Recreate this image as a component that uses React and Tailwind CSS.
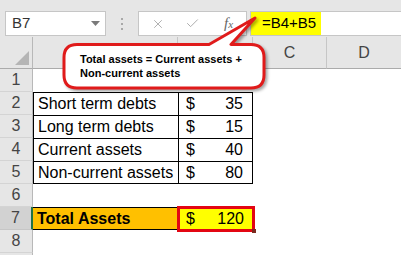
import { X, Check } from 'lucide-react'

const ROWS = [
  { n: 1 },
  { n: 2, label: 'Short term debts', value: 35, table: true },
  { n: 3, label: 'Long term debts', value: 15, table: true },
  { n: 4, label: 'Current assets', value: 40, table: true },
  { n: 5, label: 'Non-current assets', value: 80, table: true, last: true },
  { n: 6 },
  { n: 7, total: true },
  { n: 8 },
  { n: '' },
]

const RowHeader = ({ n, selected }) => (
  <div
    className={
      selected
        ? 'h-[23px] flex items-center justify-center bg-[#d2d2d2] border-r-2 border-r-[#217346] border-b border-b-[#c6c6c6] text-[16px] text-[#444]'
        : 'h-[23px] flex items-center justify-center bg-[#e6e6e6] border-r border-r-[#b8b8b8] border-b border-b-[#d4d4d4] text-[16px] text-[#444]'
    }
  >
    {n}
  </div>
)

const Row = ({ row }) => {
  if (row.table) {
    return (
      <>
        <RowHeader n={row.n} />
        <div
          className={`h-[23px] flex items-center pl-[4px] border-l border-t border-black text-[16px] text-black ${row.last ? 'border-b' : ''}`}
        >
          {row.label}
        </div>
        <div
          className={`h-[23px] flex items-center justify-between pl-[7px] pr-[9px] border-l border-t border-r border-black text-[16px] text-black ${row.last ? 'border-b' : ''}`}
        >
          <span>$</span>
          <span>{row.value}</span>
        </div>
        <div className="h-[23px]" />
        <div className="h-[23px]" />
      </>
    )
  }
  if (row.total) {
    return (
      <>
        <RowHeader n={row.n} selected />
        <div className="h-[23px] flex items-center pl-[4px] bg-[#ffc000] border-t border-b border-black text-[16px] font-bold text-black">
          Total Assets
        </div>
        <div className="h-[23px] relative">
          <div className="absolute -left-[1px] -right-[2px] -top-[1px] -bottom-[2px] flex items-center justify-between pl-[6px] pr-[8px] bg-[#ffff00] border-[3px] border-[#e30613] text-[16px] text-black">
            <span>$</span>
            <span>120</span>
          </div>
          <div className="absolute -right-[3px] -bottom-[3px] w-[4px] h-[4px] bg-[#7a2a1e]" />
        </div>
        <div className="h-[23px]" />
        <div className="h-[23px]" />
      </>
    )
  }
  return (
    <>
      <RowHeader n={row.n} />
      <div className="h-[23px]" />
      <div className="h-[23px]" />
      <div className="h-[23px]" />
      <div className="h-[23px]" />
    </>
  )
}

const Callout = () => (
  <div className="absolute left-[58px] top-[14px] w-[212px] h-[82px]">
    <svg
      width="212"
      height="82"
      viewBox="58 14 212 82"
      className="absolute inset-0 drop-shadow-[2px_2px_1.5px_rgba(0,0,0,0.35)]"
    >
      <path
        d="M 77 44.5 L 209 44.5 L 255 18 L 231 44.5 L 251 44.5 Q 264 44.5 264 57.5 L 264 75 Q 264 88 251 88 L 77 88 Q 64 88 64 75 L 64 57.5 Q 64 44.5 77 44.5 Z"
        fill="#ffffff"
        stroke="#e01b1b"
        strokeWidth="3"
        strokeLinejoin="round"
      />
    </svg>
    <div className="absolute left-[22px] top-[38px] text-[11px] leading-[14px] font-bold text-black">
      <div>Total assets = Current assets +</div>
      <div>Non-current assets</div>
    </div>
  </div>
)

export default function App() {
  return (
    <div className="relative w-[401px] h-[255px] overflow-hidden bg-white font-['Liberation_Sans',Arial,sans-serif]">
      {/* formula bar */}
      <div className="h-[37px] bg-[#e6e6e6] flex pt-[11px] pb-[1px]">
        <div className="ml-[5px] w-[101px] h-[25px] bg-white border border-[#c6c6c6] flex items-center justify-between pl-[6px] pr-[5px]">
          <span className="text-[15px] text-[#333]">B7</span>
          <svg width="9" height="5" viewBox="0 0 9 5">
            <path d="M0 0 L9 0 L4.5 5 Z" fill="#7a7a7a" />
          </svg>
        </div>
        <div className="w-[32px] flex flex-col items-center justify-center gap-[3px]">
          <div className="w-[2px] h-[2px] bg-[#a8a8a8]" />
          <div className="w-[2px] h-[2px] bg-[#a8a8a8]" />
          <div className="w-[2px] h-[2px] bg-[#a8a8a8]" />
        </div>
        <div className="w-[109px] h-[25px] bg-white border border-[#c6c6c6] flex items-center">
          <X className="ml-[12px] w-[14px] h-[14px] text-[#a6a6a6]" strokeWidth={1.5} />
          <Check className="ml-[20px] w-[15px] h-[15px] text-[#a6a6a6]" strokeWidth={1.5} />
          <span className="ml-[24px] font-['Liberation_Serif',serif] italic text-[15px] text-[#666]">
            f<span className="text-[11px]">x</span>
          </span>
        </div>
        <div className="ml-[3px] flex-1 h-[25px] bg-white border-y border-l border-[#c6c6c6] flex">
          <div className="w-[70px] h-full bg-[#ffff00] flex items-center pl-[11px] text-[15px] text-black">
            =B4+B5
          </div>
        </div>
      </div>

      {/* sheet */}
      <div className="grid grid-cols-[33px_145px_75px_74px_74px]">
        <div className="h-[32px] relative bg-[#e6e6e6] border-r border-r-[#b8b8b8] border-b border-b-[#ababab]">
          <svg width="14" height="14" viewBox="0 0 14 14" className="absolute right-[3px] bottom-[3px]">
            <path d="M14 0 L14 14 L0 14 Z" fill="#b5b5b5" />
          </svg>
        </div>
        {['', '', 'C', 'D'].map((c, i) => (
          <div
            key={i}
            className={`h-[32px] flex items-center justify-center bg-[#e6e6e6] border-b border-b-[#ababab] text-[16px] text-[#444] ${i < 3 ? 'border-r border-r-[#c6c6c6]' : ''}`}
          >
            {c}
          </div>
        ))}
        {ROWS.map((r, i) => (
          <Row key={i} row={r} />
        ))}
      </div>

      <Callout />
    </div>
  )
}
